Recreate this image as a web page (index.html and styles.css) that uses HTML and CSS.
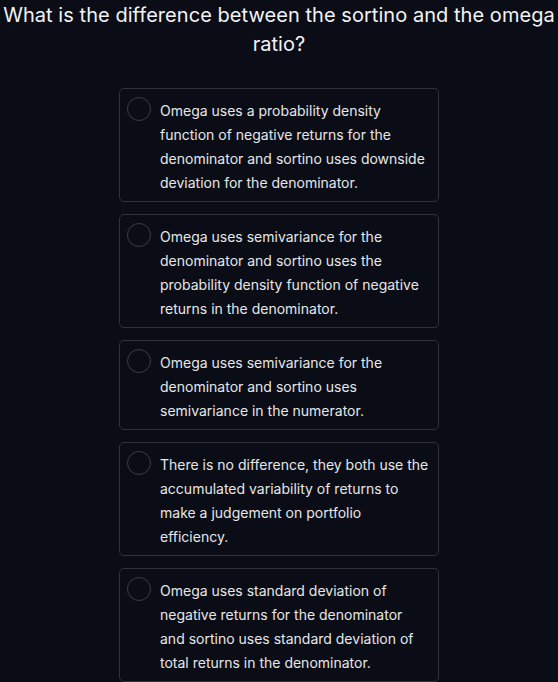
FILE: index.html
```html
<!DOCTYPE html>
<html>
<head>
<meta charset="utf-8">
<link rel="stylesheet" href="styles.css">
</head>
<body>
<h1 class="question">What is the difference between the sortino and the omega ratio?</h1>
<div class="options">
  <label class="option"><span class="radio"></span><span class="text">Omega uses a probability density function of negative returns for the denominator and sortino uses downside deviation for the denominator.</span></label>
  <label class="option"><span class="radio"></span><span class="text">Omega uses semivariance for the denominator and sortino uses the probability density function of negative returns in the denominator.</span></label>
  <label class="option"><span class="radio"></span><span class="text">Omega uses semivariance for the denominator and sortino uses semivariance in the numerator.</span></label>
  <label class="option"><span class="radio"></span><span class="text">There is no difference, they both use the accumulated variability of returns to make a judgement on portfolio efficiency.</span></label>
  <label class="option"><span class="radio"></span><span class="text">Omega uses standard deviation of negative returns for the denominator and sortino uses standard deviation of total returns in the denominator.</span></label>
</div>
</body>
</html>
```
FILE: styles.css
```css
html, body {
  margin: 0;
  padding: 0;
  background: #0a0d15;
}
body {
  font-family: Inter, "Noto Sans", sans-serif;
  color: #e8e9eb;
}
.question {
  margin: 0;
  font-size: 20px;
  font-weight: 400;
  line-height: 29px;
  letter-spacing: 0.05px;
  text-align: center;
  color: #f2f3f5;
  padding-top: 1px;
}
.options {
  width: 320px;
  margin: 29px auto 0;
  display: flex;
  flex-direction: column;
  gap: 12px;
}
.option {
  display: flex;
  align-items: flex-start;
  gap: 9px;
  border: 1px solid #2f333b;
  border-radius: 5px;
  padding: 8px 8px 6px 7px;
  box-sizing: border-box;
}
.radio {
  flex: none;
  width: 24px;
  height: 24px;
  border: 1px solid #3a3e46;
  border-radius: 50%;
  box-sizing: border-box;
}
.text {
  padding-top: 2px;
  font-size: 14px;
  line-height: 24px;
  color: #e6e7ea;
}
```
